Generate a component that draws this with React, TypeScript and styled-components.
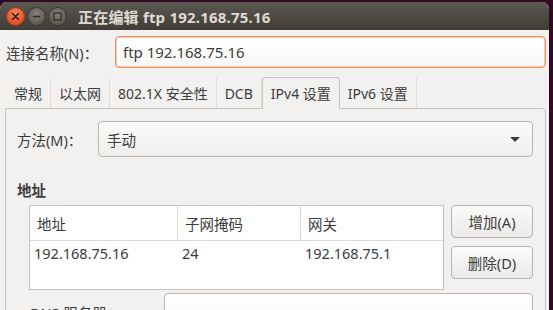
import React from 'react';
import styled, { createGlobalStyle } from 'styled-components';

const GlobalStyle = createGlobalStyle`
  html, body {
    margin: 0;
    padding: 0;
  }
  body {
    width: 553px;
    height: 310px;
    overflow: hidden;
    background: #300a24;
    font-family: "Noto Sans", "Noto Sans CJK SC", sans-serif;
    font-size: 14px;
    color: #3c3c3c;
  }
`;

const Screen = styled.div`
  position: relative;
  width: 553px;
  height: 310px;
  overflow: hidden;
`;

const TerminalLine = styled.div`
  height: 2px;
  overflow: hidden;
  padding-left: 290px;
  color: #d8d0d8;
  font-family: "DejaVu Sans Mono", monospace;
  font-size: 13px;
  line-height: 2px;
  white-space: pre;
  span {
    display: block;
    transform: translateY(-5px);
  }
`;

const Window = styled.div`
  width: 549px;
  height: 308px;
  background: #f2f1f0;
  border-radius: 7px 7px 0 0;
  overflow: hidden;
`;

const TitleBar = styled.div`
  height: 28px;
  display: flex;
  align-items: center;
  padding-left: 6px;
  background: linear-gradient(#5b5851, #403d38);
`;

const WinButton = styled.div<{ $close?: boolean }>`
  width: 19px;
  height: 19px;
  border-radius: 50%;
  margin-right: 2px;
  display: flex;
  align-items: center;
  justify-content: center;
  box-sizing: border-box;
  border: 1px solid ${(p) => (p.$close ? '#a8391c' : '#3a3834')};
  background: ${(p) =>
    p.$close
      ? 'radial-gradient(circle at 50% 35%, #f58a63, #e05228 70%)'
      : 'radial-gradient(circle at 50% 35%, #858279, #5e5b55 70%)'};
`;

const Title = styled.div`
  margin-left: 9px;
  color: #dfdbd2;
  font-weight: bold;
  font-size: 15px;
  letter-spacing: 0.2px;
`;

const Body = styled.div`
  padding: 6px 3px 0 5px;
`;

const NameRow = styled.div`
  display: flex;
  align-items: center;
  gap: 14px;
  padding-left: 1px;
`;

const Label = styled.div<{ $width?: number }>`
  width: ${(p) => (p.$width ? `${p.$width}px` : 'auto')};
  font-size: 14.5px;
  color: #3c3c3c;
  white-space: nowrap;
`;

const TextInput = styled.div<{ $focus?: boolean }>`
  flex: 1;
  height: 32px;
  box-sizing: border-box;
  border: 1px solid ${(p) => (p.$focus ? '#e9916a' : '#b9b5ae')};
  box-shadow: ${(p) => (p.$focus ? 'inset 0 0 0 1px #f5c8b0' : 'none')};
  border-radius: 4px;
  background: linear-gradient(#ffffff, #f8f8f7);
  display: flex;
  align-items: center;
  padding-left: 7px;
  font-size: 15px;
  color: #3c3c3c;
`;

const TabBar = styled.div`
  display: flex;
  align-items: flex-end;
  margin-top: 8px;
  height: 32px;
  padding-left: 1px;
`;

const Tab = styled.div<{ $active?: boolean }>`
  height: ${(p) => (p.$active ? '32px' : '30px')};
  box-sizing: border-box;
  padding: 0 8px;
  display: flex;
  align-items: center;
  font-size: 14px;
  color: #3c3c3c;
  white-space: nowrap;
  position: relative;
  z-index: ${(p) => (p.$active ? 2 : 0)};
  background: #f2f1f0;
  border: ${(p) => (p.$active ? '1px solid #c8c3bd' : 'none')};
  border-bottom: none;
  border-right: ${(p) => (p.$active ? '1px solid #c8c3bd' : '1px solid #dedad6')};
  border-radius: ${(p) => (p.$active ? '4px 4px 0 0' : '0')};
  margin-bottom: ${(p) => (p.$active ? '-1px' : '0')};
  padding-bottom: ${(p) => (p.$active ? '1px' : '0')};
`;

const Panel = styled.div`
  width: 541px;
  height: 230px;
  box-sizing: border-box;
  border: 1px solid #c8c3bd;
  border-radius: 0 4px 0 0;
  padding: 12px 12px 0 11px;
  position: relative;
  z-index: 1;
`;

const MethodRow = styled.div`
  display: flex;
  align-items: center;
`;

const Combo = styled.div`
  flex: 1;
  height: 36px;
  box-sizing: border-box;
  border: 1px solid #b9b5ae;
  border-radius: 4px;
  background: linear-gradient(#fbfbfa, #efeeec);
  display: flex;
  align-items: center;
  justify-content: space-between;
  padding: 0 12px 0 8px;
  font-size: 14.5px;
`;

const Arrow = styled.div`
  width: 0;
  height: 0;
  border-left: 5px solid transparent;
  border-right: 5px solid transparent;
  border-top: 5px solid #3c3c3c;
`;

const SectionTitle = styled.div`
  margin-top: 22px;
  font-weight: bold;
  font-size: 14.5px;
  color: #3c3c3c;
`;

const AddressArea = styled.div`
  display: flex;
  gap: 7px;
  margin-top: 5px;
  padding-left: 12px;
`;

const Table = styled.div`
  width: 416px;
  height: 85px;
  box-sizing: border-box;
  border: 1px solid #c5c1bb;
  background: #ffffff;
`;

const TableRow = styled.div<{ $head?: boolean }>`
  display: grid;
  grid-template-columns: 148px 123px 1fr;
  height: ${(p) => (p.$head ? '34px' : '24px')};
  border-bottom: ${(p) => (p.$head ? '1px solid #dcd9d5' : 'none')};
`;

const Cell = styled.div<{ $head?: boolean }>`
  display: flex;
  align-items: center;
  padding-left: ${(p) => (p.$head ? '7px' : '4px')};
  font-size: 14.5px;
  color: #3c3c3c;
  border-right: ${(p) => (p.$head ? '1px solid #dcd9d5' : 'none')};
  &:last-child {
    border-right: none;
  }
`;

const ButtonColumn = styled.div`
  display: flex;
  flex-direction: column;
  gap: 8px;
`;

const Button = styled.div`
  width: 82px;
  height: 33px;
  box-sizing: border-box;
  border: 1px solid #b9b5ae;
  border-radius: 4px;
  background: linear-gradient(#fafaf9, #eceae8);
  display: flex;
  align-items: center;
  justify-content: center;
  font-size: 14.5px;
  color: #3c3c3c;
`;

const DnsRow = styled.div`
  display: flex;
  align-items: flex-start;
  margin-top: 3px;
  padding-left: 13px;
`;

const DnsLabel = styled.div`
  width: 134px;
  padding-top: 1px;
  font-size: 14.5px;
  margin-top: 8px;
  white-space: nowrap;
`;

const DnsInput = styled.div`
  flex: 1;
  height: 32px;
  box-sizing: border-box;
  border: 1px solid #b9b5ae;
  border-radius: 4px;
  background: linear-gradient(#ffffff, #f8f8f7);
`;

const CloseIcon = () => (
  <svg width="9" height="9" viewBox="0 0 9 9">
    <path d="M1.5 1.5 L7.5 7.5 M7.5 1.5 L1.5 7.5" stroke="#3b1d12" strokeWidth="1.6" strokeLinecap="round" />
  </svg>
);

const MinIcon = () => (
  <svg width="9" height="9" viewBox="0 0 9 9">
    <path d="M1 4.5 H8" stroke="#2e2c29" strokeWidth="1.6" />
  </svg>
);

const MaxIcon = () => (
  <svg width="9" height="9" viewBox="0 0 9 9">
    <rect x="1" y="1" width="7" height="7" fill="none" stroke="#2e2c29" strokeWidth="1.3" />
  </svg>
);

const tabs = ['常规', '以太网', '802.1X 安全性', 'DCB', 'IPv4 设置', 'IPv6 设置'];

export default function App() {
  return (
    <Screen>
      <GlobalStyle />
      <TerminalLine>
        <span>UP BROADCAST RUNNING MULTICAST</span>
      </TerminalLine>
      <Window>
        <TitleBar>
          <WinButton $close>
            <CloseIcon />
          </WinButton>
          <WinButton>
            <MinIcon />
          </WinButton>
          <WinButton>
            <MaxIcon />
          </WinButton>
          <Title>正在编辑 ftp 192.168.75.16</Title>
        </TitleBar>
        <Body>
          <NameRow>
            <Label $width={95}>连接名称(N)：</Label>
            <TextInput $focus>ftp 192.168.75.16</TextInput>
          </NameRow>
          <TabBar>
            {tabs.map((t) => (
              <Tab key={t} $active={t === 'IPv4 设置'}>
                {t}
              </Tab>
            ))}
          </TabBar>
          <Panel>
            <MethodRow>
              <Label $width={81}>方法(M)：</Label>
              <Combo>
                <span>手动</span>
                <Arrow />
              </Combo>
            </MethodRow>
            <SectionTitle>地址</SectionTitle>
            <AddressArea>
              <Table>
                <TableRow $head>
                  <Cell $head>地址</Cell>
                  <Cell $head>子网掩码</Cell>
                  <Cell $head>网关</Cell>
                </TableRow>
                <TableRow>
                  <Cell>192.168.75.16</Cell>
                  <Cell>24</Cell>
                  <Cell>192.168.75.1</Cell>
                </TableRow>
              </Table>
              <ButtonColumn>
                <Button>增加(A)</Button>
                <Button>删除(D)</Button>
              </ButtonColumn>
            </AddressArea>
            <DnsRow>
              <DnsLabel>DNS 服务器：</DnsLabel>
              <DnsInput />
            </DnsRow>
          </Panel>
        </Body>
      </Window>
    </Screen>
  );
}
